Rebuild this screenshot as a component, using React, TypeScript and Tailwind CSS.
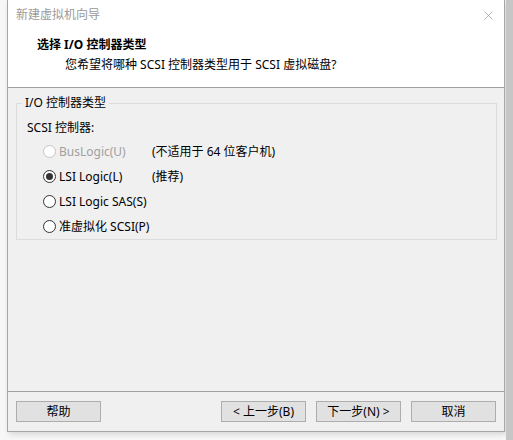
import { X } from "lucide-react";

const font = { fontFamily: '"Noto Sans", "Noto Sans CJK SC", sans-serif' };

interface RadioProps {
  label: string;
  note?: string;
  checked?: boolean;
  disabled?: boolean;
}

function Radio({ label, note, checked, disabled }: RadioProps) {
  return (
    <div className="flex items-center h-[25px]">
      <span
        className={
          "w-[13px] h-[13px] rounded-full border flex items-center justify-center bg-white " +
          (disabled ? "border-[#c4c4c4]" : "border-[#333333]")
        }
      >
        {checked && <span className="w-[7px] h-[7px] rounded-full bg-[#333333]" />}
      </span>
      <span
        className={
          "ml-[3px] w-[93px] " + (disabled ? "text-[#a0a0a0]" : "text-black")
        }
      >
        {label}
      </span>
      {note && <span className="text-black">{note}</span>}
    </div>
  );
}

function Btn({ children }: { children: React.ReactNode }) {
  return (
    <button className="w-[85px] h-[21px] bg-[#e1e1e1] border border-[#adadad] text-[12px] leading-none text-black flex items-center justify-center">
      {children}
    </button>
  );
}

export default function App() {
  return (
    <div
      className="w-[513px] h-[440px] flex bg-[#f7f7f7] overflow-hidden text-[12px] leading-none"
      style={font}
    >
      <div className="ml-[7px] w-[498px] h-[432px] flex flex-col border-l border-r border-b border-[#a6a6a6] shadow-[2px_2px_6px_rgba(0,0,0,0.15)]">
        {/* header */}
        <div className="h-[88px] bg-white border-b border-[#a0a0a0] flex flex-col">
          <div className="flex items-center justify-between h-[30px] pl-[8px] pr-[8px]">
            <span className="text-[#9a9a9a]">新建虚拟机向导</span>
            <X className="w-[15px] h-[15px] text-[#8a8a8a]" strokeWidth={1} />
          </div>
          <div className="pl-[29px] mt-[9px] font-bold text-black">
            选择 I/O 控制器类型
          </div>
          <div className="pl-[57px] mt-[8px] text-black">
            您希望将哪种 SCSI 控制器类型用于 SCSI 虚拟磁盘?
          </div>
        </div>

        {/* body */}
        <div className="flex-1 bg-[#f0f0f0] pt-[15px] pl-[8px]">
          <div className="relative w-[481px] h-[137px] border border-[#dcdcdc] pl-[10px] pt-[18px]">
            <span className="absolute -top-[7px] left-[5px] px-[3px] bg-[#f0f0f0] text-black">
              I/O 控制器类型
            </span>
            <div className="text-black">SCSI 控制器:</div>
            <div className="mt-[5px] pl-[16px] flex flex-col">
              <Radio label="BusLogic(U)" note="(不适用于 64 位客户机)" disabled />
              <Radio label="LSI Logic(L)" note="(推荐)" checked />
              <Radio label="LSI Logic SAS(S)" />
              <Radio label="准虚拟化 SCSI(P)" />
            </div>
          </div>
        </div>

        {/* footer */}
        <div className="h-[40px] bg-[#f0f0f0] border-t border-[#a0a0a0] flex items-start pt-[9px] pl-[8px]">
          <Btn>帮助</Btn>
          <div className="ml-[120px] flex gap-[10px]">
            <Btn>&lt; 上一步(B)</Btn>
            <Btn>下一步(N) &gt;</Btn>
            <Btn>取消</Btn>
          </div>
        </div>
      </div>
      <div className="flex-1 h-[440px] bg-[#c6c6c6] ml-[1px]" />
    </div>
  );
}
